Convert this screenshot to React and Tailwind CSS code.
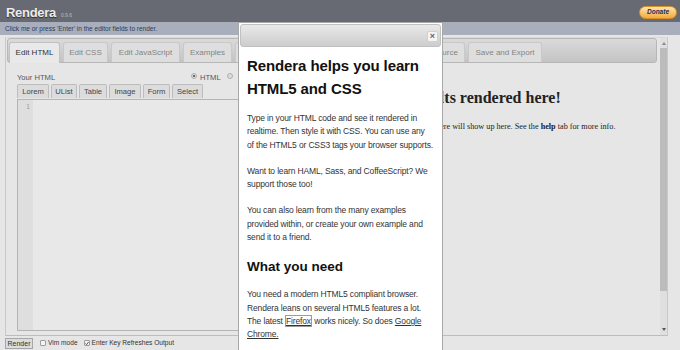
import React from "react";

const SANS = "font-['Liberation_Sans',Arial,sans-serif]";
const SERIF = "font-['Liberation_Serif','Times_New_Roman',serif]";

const tabs = [
	{ label: "Edit HTML", width: "w-[51px]", active: true },
	{ label: "Edit CSS", width: "w-[45px]" },
	{ label: "Edit JavaScript", width: "w-[69px]" },
	{ label: "Examples", width: "w-[49px]" },
	{ label: "Help", width: "w-[40px]" },
	{ label: "Options", width: "w-[52px]" },
	{ label: "Libraries", width: "w-[70px]" },
	{ label: "View Source", width: "w-[59px]" },
	{ label: "Save and Export", width: "w-[74px]" },
];

const snippets = [
	{ label: "Lorem", width: "w-[32px]" },
	{ label: "UList", width: "w-[26px]" },
	{ label: "Table", width: "w-[28px]" },
	{ label: "Image", width: "w-[32px]" },
	{ label: "Form", width: "w-[27px]" },
	{ label: "Select", width: "w-[31px]" },
];

const Checkbox = ({ checked }) => (
	<span className="w-[6px] h-[6px] border border-[#9d9d9d] bg-[#f4f4f4] rounded-[1px] flex items-center justify-center">
		{checked && (
			<svg width="5" height="5" viewBox="0 0 10 10">
				<polyline points="1,5 4,8 9,1" fill="none" stroke="#333" strokeWidth="2" />
			</svg>
		)}
	</span>
);

const Radio = ({ checked }) => (
	<span className="w-[6px] h-[6px] rounded-full border border-[#b0b0b0] bg-[#dcdcdc] flex items-center justify-center">
		{checked && <span className="w-[2px] h-[2px] rounded-full bg-[#444]" />}
	</span>
);

const Header = () => (
	<div className="h-[22px] bg-[#676a72] flex justify-between items-start">
		<div className="flex items-baseline pl-[6px] pt-[6px]">
			<span className="text-[13px] leading-[13px] font-bold tracking-[-0.3px] text-[#ececec] [text-shadow:0_1px_1px_#2c2e33]">
				Rendera
			</span>
			<span className="ml-[5px] text-[5px] text-[#b9bcc2]">0.9.6</span>
		</div>
		<button className="mt-[6px] mr-[3px] w-[38px] h-[13px] rounded-full border border-[#d9912a] bg-linear-to-b from-[#fee3a8] to-[#f6a935] text-[6.5px] leading-none italic font-bold text-[#1c2c5a]">
			Donate
		</button>
	</div>
);

const TabStrip = () => (
	<div className="ml-[1px] mr-[3px] h-[25px] rounded-[3px] border border-[#b7b7b7] bg-linear-to-b from-[#dadada] to-[#c4c4c4] flex items-end gap-[3px] pl-[1px]">
		{tabs.map((tab) => (
			<div
				key={tab.label}
				className={`${tab.width} shrink-0 rounded-t-[3px] border border-b-0 flex items-center justify-center text-[8px] whitespace-nowrap ${
					tab.active
						? "h-[21px] -mb-px bg-[#e9e9e9] border-[#c2c2c2] text-[#333]"
						: "h-[20px] bg-[#dedede] border-[#c9c9c9] text-[#858585]"
				}`}
			>
				{tab.label}
			</div>
		))}
	</div>
);

const Editor = () => (
	<div className="w-[329px] shrink-0 pl-[11px] flex flex-col">
		<div className="mt-[8px] h-[13px] flex text-[7.6px] leading-[13px] text-[#555]">
			<span className="w-[174px] shrink-0">Your HTML</span>
			<span className="mt-[2px]">
				<Radio checked />
			</span>
			<span className="ml-[3px]">HTML</span>
			<span className="ml-[6px] mt-[2px]">
				<Radio />
			</span>
		</div>
		<div className="h-[14px] flex gap-[2px] mb-[1px]">
			{snippets.map((s) => (
				<button
					key={s.label}
					className={`${s.width} h-[14px] border border-b-0 border-[#bcbcbc] rounded-t-[2px] bg-[#dcdcdc] text-[7.6px] leading-none text-[#444]`}
				>
					{s.label}
				</button>
			))}
		</div>
		<div className="w-[318px] h-[232px] border border-[#b4b4b4] bg-[#e8e8e8] flex">
			<div className="w-[15px] h-full bg-[#dedede] text-right pr-[3px] pt-[3px] text-[6.5px] text-[#9a9a9a] font-['DejaVu_Sans_Mono',monospace]">
				1
			</div>
		</div>
	</div>
);

const Output = () => (
	<div className={`flex-1 pl-[13px] ${SERIF} text-[#222] whitespace-nowrap`}>
		<div className="mt-[27px] text-[16px] leading-none font-bold">See your results rendered here!</div>
		<div className="mt-[17px] ml-[8px] text-[8.2px] leading-none">
			Anything you type over here will show up here. See the <b>help</b> tab for more info.
		</div>
	</div>
);

const Scrollbar = () => (
	<div className="w-[7px] shrink-0 bg-[#dfdfdf] flex flex-col">
		<div className="h-[10px] flex items-center justify-center">
			<span className="w-0 h-0 border-l-[2px] border-r-[2px] border-b-[3px] border-l-transparent border-r-transparent border-b-[#888]" />
		</div>
		<div className="h-[243px] bg-[#bcbcbc]" />
		<div className="flex-1 flex items-end justify-center pb-[4px]">
			<span className="w-0 h-0 border-l-[2px] border-r-[2px] border-t-[3px] border-l-transparent border-r-transparent border-t-[#555]" />
		</div>
	</div>
);

const Modal = () => (
	<div className={`absolute left-[238px] top-[22px] w-[205px] h-[340px] bg-white border border-[#a8a8a8] ${SANS}`}>
		<div className="m-[1px] h-[23px] rounded-[3px] border border-[#c0c0c0] bg-linear-to-b from-[#e9e9e9] to-[#cdcdcd] flex items-center justify-end pr-[2px]">
			<button className="mt-[1px] w-[11px] h-[11px] rounded-[2px] border border-[#d0d0d0] bg-[#f5f5f5] text-[9px] leading-none font-bold text-[#666]">
				×
			</button>
		</div>
		<div className="px-[8px] pt-[6px] whitespace-nowrap">
			<h1 className="text-[15px] leading-[23px] font-bold tracking-[-0.1px] text-[#111]">
				Rendera helps you learn
				<br />
				HTML5 and CSS
			</h1>
			<div className="text-[8.5px] leading-[13.3px] tracking-[-0.15px] text-[#333]">
				<p className="mt-[12px]">
					Type in your HTML code and see it rendered in
					<br />
					realtime. Then style it with CSS. You can use any
					<br />
					of the HTML5 or CSS3 tags your browser supports.
				</p>
				<p className="mt-[13px]">
					Want to learn HAML, Sass, and CoffeeScript? We
					<br />
					support those too!
				</p>
				<p className="mt-[13px]">
					You can also learn from the many examples
					<br />
					provided within, or create your own example and
					<br />
					send it to a friend.
				</p>
			</div>
			<h2 className="mt-[14px] text-[13.5px] leading-[18px] font-bold text-[#111]">What you need</h2>
			<p className="mt-[12px] text-[8.5px] leading-[13.3px] tracking-[-0.15px] text-[#333]">
				You need a modern HTML5 compliant browser.
				<br />
				Rendera leans on several HTML5 features a lot.
				<br />
				The latest <a className="underline border border-[#9a9a9a]">Firefox</a> works nicely. So does{" "}
				<a className="underline">Google</a>
				<br />
				<a className="underline">Chrome.</a>
			</p>
		</div>
	</div>
);

export default function App() {
	return (
		<div className={`relative w-[680px] h-[350px] overflow-hidden bg-[#e6e6e6] flex flex-col ${SANS}`}>
			<Header />
			<div className="h-[13px] bg-[#a8aebb] pl-[5px] text-[6.5px] leading-[13px] text-[#2e3b58]">
				Click me or press 'Enter' in the editor fields to render.
			</div>
			<div className="h-[301px] pt-[2px]">
				<div className="ml-[5px] w-[663px] h-[299px] border border-t-[#dadada] border-x-[#c9c9c9] border-b-[#bdbdbd] flex overflow-hidden">
					<div className="w-[654px] shrink-0 flex flex-col">
						<TabStrip />
						<div className="flex flex-1">
							<Editor />
							<Output />
						</div>
					</div>
					<Scrollbar />
				</div>
			</div>
			<div className="h-[14px] flex items-center pl-[5px] text-[6.6px] text-[#333]">
				<button className="w-[28px] h-[11px] border border-[#a6a6a6] bg-[#dcdcdc] text-[7px] leading-none text-[#333]">
					Render
				</button>
				<span className="ml-[7px]">
					<Checkbox />
				</span>
				<span className="ml-[2px]">Vim mode</span>
				<span className="ml-[6px]">
					<Checkbox checked />
				</span>
				<span className="ml-[2px]">Enter Key Refreshes Output</span>
			</div>
			<Modal />
		</div>
	);
}
